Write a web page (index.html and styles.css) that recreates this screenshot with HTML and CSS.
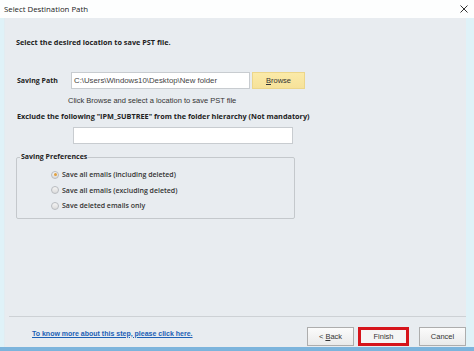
FILE: index.html
```html
<!DOCTYPE html>
<html>
<head>
<meta charset="utf-8">
<link rel="stylesheet" href="styles.css">
</head>
<body>
<div class="window">
  <div class="titlebar">
    <span class="title">Select Destination Path</span>
    <svg class="close" width="8" height="8" viewBox="0 0 8 8"><path d="M0.5 0.5L7.5 7.5M7.5 0.5L0.5 7.5" stroke="#333" stroke-width="1"/></svg>
  </div>
  <div class="body">
    <div class="main">
      <div class="intro">Select the desired location to save PST file.</div>
      <div class="path-row">
        <span class="label">Saving Path</span>
        <div class="input path-input">C:\Users\Windows10\Desktop\New folder</div>
        <button class="browse"><u>B</u>rowse</button>
      </div>
      <div class="hint">Click Browse and select a location to save PST file</div>
      <div class="exclude">Exclude the following "IPM_SUBTREE" from the folder hierarchy (Not mandatory)</div>
      <div class="input ex-input"></div>
      <fieldset class="prefs">
        <legend>Saving Preferences</legend>
        <div class="radios">
          <label class="radio"><span class="dot checked"></span>Save all emails (including deleted)</label>
          <label class="radio"><span class="dot"></span>Save all emails (excluding deleted)</label>
          <label class="radio"><span class="dot"></span>Save deleted emails only</label>
        </div>
      </fieldset>
    </div>
    <div class="footer">
      <a class="link" href="#">To know more about this step, please click here.</a>
      <div class="buttons">
        <button class="btn">&lt; <u>B</u>ack</button>
        <button class="btn finish">Finish</button>
        <button class="btn cancel">Cancel</button>
      </div>
    </div>
  </div>
  <div class="bottombar"></div>
</div>
</body>
</html>
```
FILE: styles.css
```css
* { box-sizing: border-box; }
html, body { margin: 0; padding: 0; }
body { width: 474px; height: 351px; overflow: hidden; background: #dff2f8; font-family: "Open Sans", "Noto Sans", sans-serif; }
.window { width: 474px; height: 351px; display: flex; flex-direction: column; }
.titlebar { height: 18px; background: #fdfefe; display: flex; align-items: center; justify-content: space-between; padding: 0 6px 0 4px; }
.title { font-size: 7.8px; color: #222; }
.close { margin-top: -1px; }
.body { flex: 1; background: #e8ecf0; margin: 0 8px 0 4px; display: flex; flex-direction: column; justify-content: space-between; border-left: 1px solid #e2ecf1; }
.main { padding: 0 0 0 11px; }
.intro { font-size: 7.3px; font-weight: 700; color: #1d1d1d; margin-top: 19px; height: 10px; line-height: 10px; }
.path-row { display: flex; align-items: center; margin-top: 25px; height: 17px; }
.label { font-size: 7px; font-weight: 700; color: #222; width: 55px; padding-left: 1px; }
.input { background: #fff; border: 1px solid #c8ccd0; height: 17px; }
.path-input { width: 179px; font-family: "Liberation Sans", Arial, sans-serif; font-size: 7.8px; color: #444; padding: 2px 2px; line-height: 11px; }
.browse { margin-left: 2px; width: 53px; height: 17px; background: linear-gradient(#fbeaa8, #f6e29a); border: 1px solid #ecd68a; font-family: "Liberation Sans", Arial, sans-serif; font-size: 7.5px; color: #333; padding: 0; }
.hint { font-family: "Liberation Sans", Arial, sans-serif; font-size: 7.5px; color: #333; margin: 7px 0 0 52px; height: 10px; line-height: 10px; }
.exclude { font-size: 7.3px; font-weight: 700; color: #222; margin-top: 5px; height: 10px; line-height: 10px; padding-left: 1px; }
.ex-input { width: 220px; margin: 6px 0 0 57px; height: 17px; }
.prefs { margin: 9px 0 0 0; width: 279px; height: 66px; border: 1px solid #c4c8cc; border-radius: 2px; padding: 0; }
.prefs legend { font-size: 7px; font-weight: 700; color: #222; padding: 0 1px; margin-left: 3px; line-height: 8px; }
.radios { padding: 6px 0 0 34px; }
.radio { display: flex; align-items: center; font-size: 7px; font-weight: 600; color: #333; height: 15.5px; }
.dot { width: 8px; height: 8px; border-radius: 50%; border: 1px solid #b9bcc0; background: linear-gradient(#f4f4f4, #dcdcdc); margin-right: 3px; position: relative; }
.dot.checked::after { content: ""; position: absolute; left: 1.5px; top: 1.5px; width: 3px; height: 3px; border-radius: 50%; background: #e0a040; }
.footer { border-top: 1px solid #cdd1d5; margin: 0 0 0 4px; height: 31px; display: flex; align-items: center; justify-content: space-between; padding: 0 0 0 23px; }
.link { font-size: 7px; color: #1b5fb5; font-family: "Liberation Sans", Arial, sans-serif; font-weight: 700; margin-top: 2px; }
.buttons { display: flex; gap: 4px; margin-top: 10px; align-self: flex-start; }
.btn { width: 47px; height: 19px; background: linear-gradient(#fbfbfb, #eaeaea); border: 1px solid #adadad; font-family: "Liberation Sans", Arial, sans-serif; font-size: 7.5px; color: #333; padding: 0; }
.btn.finish { width: 51px; border: 3px solid #d6141b; background: #f5f5f5; }
.btn.cancel { margin-left: 6px; }
.bottombar { height: 4px; background: #7cb4dc; }
```
